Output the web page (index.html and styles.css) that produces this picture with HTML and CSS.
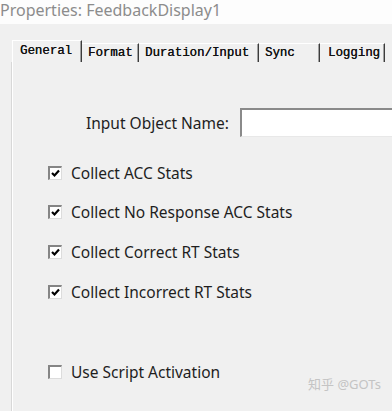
FILE: index.html
```html
<!DOCTYPE html>
<html lang="en">
<head>
    <meta charset="UTF-8">
    <title>Properties: FeedbackDisplay1</title>
    <link rel="stylesheet" href="styles.css">
</head>
<body>
    <div class="window">
        <div class="titlebar">Properties: FeedbackDisplay1</div>

        <div class="tabs">
            <div class="tab tab_general active">General</div>
            <div class="tab tab_format">Format</div>
            <div class="tab tab_duration">Duration/Input</div>
            <div class="tab tab_sync">Sync</div>
            <div class="tab tab_logging">Logging</div>
        </div>

        <div class="panel">
            <div class="input_row">
                <label class="input_label">Input Object Name:</label>
                <div class="text_box"></div>
            </div>

            <div class="check_row">
                <span class="checkbox checked"><svg viewBox="0 0 9 9"><path d="M1 4 L3.5 6.5 L8 1.5" /></svg></span>
                <span class="check_text">Collect ACC Stats</span>
            </div>
            <div class="check_row">
                <span class="checkbox checked"><svg viewBox="0 0 9 9"><path d="M1 4 L3.5 6.5 L8 1.5" /></svg></span>
                <span class="check_text">Collect No Response ACC Stats</span>
            </div>
            <div class="check_row">
                <span class="checkbox checked"><svg viewBox="0 0 9 9"><path d="M1 4 L3.5 6.5 L8 1.5" /></svg></span>
                <span class="check_text">Collect Correct RT Stats</span>
            </div>
            <div class="check_row">
                <span class="checkbox checked"><svg viewBox="0 0 9 9"><path d="M1 4 L3.5 6.5 L8 1.5" /></svg></span>
                <span class="check_text">Collect Incorrect RT Stats</span>
            </div>

            <div class="check_row script_row">
                <span class="checkbox"></span>
                <span class="check_text">Use Script Activation</span>
            </div>
        </div>

        <div class="watermark">知乎 @GOTs</div>
    </div>
</body>
</html>
```

FILE: styles.css
```css
*{
    box-sizing: border-box;
}
body{
    margin: 0;
    background-color: #f0f0f0;
    overflow: hidden;
}
.window{
    position: relative;
    width: 392px;
    height: 411px;
    background-color: #f0f0f0;
    overflow: hidden;
}

/* 標題列 */
.titlebar{
    height: 24px;
    background-color: #fdfdfd;
    color: #8c8c8c;
    font-family: "Noto Sans", sans-serif;
    font-size: 16px;
    line-height: 20px;
    white-space: nowrap;
}

/* 分頁標籤 */
.tabs{
    display: flex;
    align-items: flex-end;
    height: 38px;
    padding: 0 0 0 12px;
}
.tab{
    flex-shrink: 0;
    height: 19px;
    font-family: "Liberation Mono", "DejaVu Sans Mono", monospace;
    font-size: 12.4px;
    line-height: 18px;
    color: #111;
    border-top: 1px solid #ffffff;
    border-right: 1px solid #3c3c3c;
    box-shadow: inset -1px 0 #a0a0a0;
    padding: 0 0 0 6px;
    white-space: nowrap;
    text-shadow: 0.25px 0 0 #111;
}
.tab.active{
    height: 22px;
    line-height: 20px;
    border-left: 1px solid #ffffff;
    padding: 0 0 0 7px;
    background-color: #f0f0f0;
}
.tab_general{
    width: 70px;
}
.tab_format{
    width: 57px;
}
.tab_duration{
    width: 120px;
}
.tab_sync{
    width: 61px;
}
.tab_logging{
    width: 65px;
    padding-left: 8px;
}

/* 內容區 */
.panel{
    margin: 0 0 0 12px;
    height: 360px;
    border-left: 1px solid #ffffff;
    box-shadow: -1px 0 #d8d8d8;
    padding: 46px 0 0 0;
    font-family: "Noto Sans", sans-serif;
    color: #1e1e1e;
}
.input_row{
    display: flex;
    align-items: center;
    height: 29px;
    padding: 0 0 0 73px;
    margin: 0 0 16px 0;
}
.input_label{
    flex-shrink: 0;
    font-size: 15.5px;
    width: 154px;
    white-space: nowrap;
}
.text_box{
    flex-shrink: 0;
    width: 200px;
    height: 29px;
    background-color: #ffffff;
    border-top: 2px solid #8a8a8a;
    border-left: 2px solid #8a8a8a;
    border-bottom: 1px solid #e8e8e8;
}
.check_row{
    display: flex;
    align-items: center;
    height: 39.6px;
    padding: 0 0 0 35px;
}
.script_row{
    margin: 41px 0 0 0;
}
.checkbox{
    width: 14px;
    height: 14px;
    background-color: #ffffff;
    border-top: 2px solid #858585;
    border-left: 2px solid #858585;
    border-right: 1px solid #dcdcdc;
    border-bottom: 1px solid #dcdcdc;
    display: flex;
    align-items: center;
    justify-content: center;
    margin: 0 9px 0 0;
}
.checkbox svg{
    width: 9px;
    height: 9px;
    fill: none;
    stroke: #000;
    stroke-width: 2.2;
}
.check_text{
    font-size: 15.5px;
    white-space: nowrap;
}

/* 浮水印 */
.watermark{
    position: absolute;
    right: 11px;
    top: 374px;
    font-family: "Noto Sans", "Noto Sans CJK SC", sans-serif;
    font-size: 13px;
    color: #c4c4c4;
}
```
